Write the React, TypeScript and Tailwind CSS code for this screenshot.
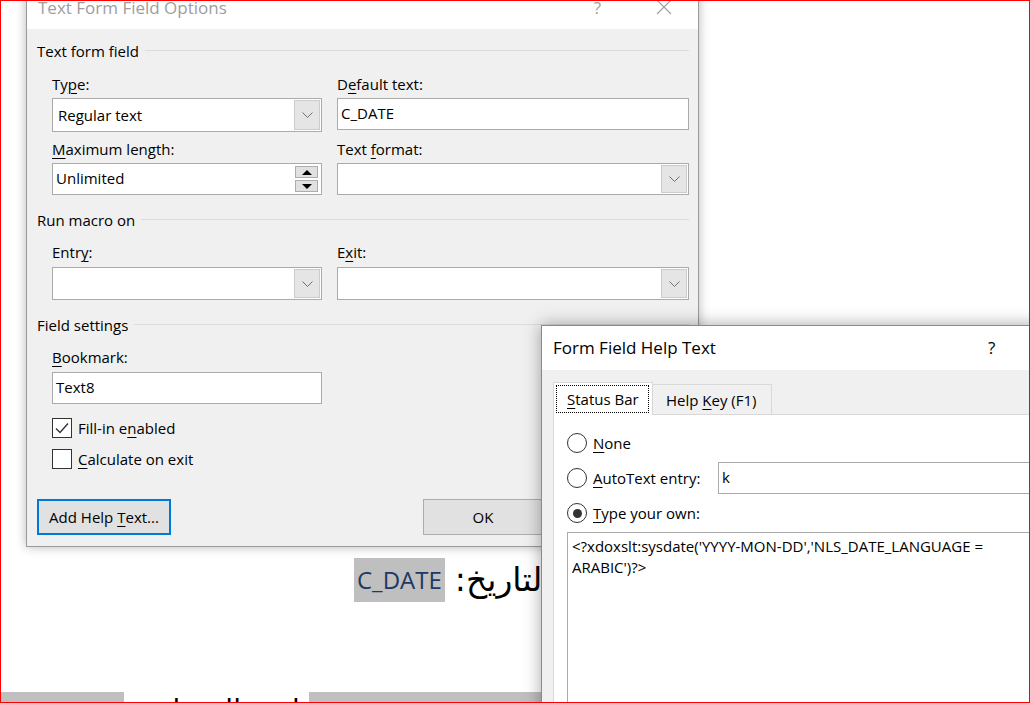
import React from 'react';

const ui = "font-['Open_Sans',sans-serif]";

function U({ children }: { children: React.ReactNode }) {
  return <span className="underline decoration-1 underline-offset-[3px]">{children}</span>;
}

function Chevron() {
  return (
    <svg width="11" height="6" viewBox="0 0 11 6" aria-hidden="true">
      <path d="M0.5 0.5L5.5 5.5L10.5 0.5" fill="none" stroke="#707070" strokeWidth="1" />
    </svg>
  );
}

function Combo({ value, className = '' }: { value?: string; className?: string }) {
  return (
    <div className={`flex border border-[#ababab] bg-white p-px ${className}`}>
      <div className="flex flex-1 items-center pl-[4px]">{value}</div>
      <div className="flex w-[26px] items-center justify-center border border-[#cccccc] bg-[#e5e5e5]">
        <Chevron />
      </div>
    </div>
  );
}

function TextBox({ value, className = '' }: { value?: string; className?: string }) {
  return (
    <div className={`flex items-center border border-[#ababab] bg-white pb-[2px] pl-[3px] ${className}`}>{value}</div>
  );
}

function Spinner() {
  return (
    <div className="flex h-[32px] border border-[#ababab] bg-white p-px">
      <div className="flex flex-1 items-center pb-[2px] pl-[2px]">Unlimited</div>
      <div className="flex w-[25px] flex-col gap-[2px] py-px pr-[2px]">
        <div className="flex flex-1 items-center justify-center border border-[#adadad] bg-[#e1e1e1]">
          <svg width="10" height="5" viewBox="0 0 10 5" aria-hidden="true">
            <path d="M0 5L5 0L10 5Z" fill="#000" />
          </svg>
        </div>
        <div className="flex flex-1 items-center justify-center border border-[#adadad] bg-[#e1e1e1]">
          <svg width="10" height="5" viewBox="0 0 10 5" aria-hidden="true">
            <path d="M0 0L5 5L10 0Z" fill="#000" />
          </svg>
        </div>
      </div>
    </div>
  );
}

function Group({ title }: { title: string }) {
  return (
    <div className="flex h-[20px] items-center leading-[20px]">
      <span>{title}</span>
      <div className="ml-[6px] mt-[-2px] h-px flex-1 bg-[#dcdcdc]" />
    </div>
  );
}

function Label({ children }: { children: React.ReactNode }) {
  return <div className="h-[20px] leading-[20px]">{children}</div>;
}

function Check({ checked, children }: { checked?: boolean; children: React.ReactNode }) {
  return (
    <div className="flex h-[20px] items-center">
      <div className="flex h-[20px] w-[20px] items-center justify-center border border-[#333333] bg-white">
        {checked && (
          <svg width="14" height="12" viewBox="0 0 14 12" aria-hidden="true">
            <path d="M1 6.5L5 10.5L13 1.5" fill="none" stroke="#333333" strokeWidth="1.4" />
          </svg>
        )}
      </div>
      <span className="ml-[6px] leading-[20px]">{children}</span>
    </div>
  );
}

function Radio({ on }: { on?: boolean }) {
  return (
    <div className="flex h-[20px] w-[20px] shrink-0 items-center justify-center rounded-full border border-[#333333] bg-white">
      {on && <div className="h-[9px] w-[9px] rounded-full bg-[#333333]" />}
    </div>
  );
}

function CloseX({ color }: { color: string }) {
  return (
    <svg width="16" height="16" viewBox="0 0 16 16" aria-hidden="true">
      <path d="M1 1L15 15M15 1L1 15" stroke={color} strokeWidth="1.1" />
    </svg>
  );
}

function FieldOptions() {
  return (
    <div
      className={`absolute left-[26px] top-[-16px] w-[673px] border border-[#9a9a9a] bg-[#f0f0f0] text-[15px] text-black shadow-[0_0_10px_rgba(0,0,0,0.28)] ${ui}`}
    >
      <div className="flex h-[44px] items-center bg-white pl-[11px] pt-[2px] text-[17px] text-[#9d9d9d]">
        <span>Text Form Field Options</span>
        <span className="ml-[367px]">?</span>
        <span className="ml-[55px] mt-[-2px]">
          <CloseX color="#9d9d9d" />
        </span>
      </div>

      <div className="pl-[10px] pr-[9px] pt-[12px] pb-[11px]">
        <Group title="Text form field" />
        <div className="mt-[13px] grid grid-cols-[270px_352px] gap-x-[15px] pl-[15px]">
          <div>
            <Label>
              Ty<U>p</U>e:
            </Label>
            <Combo value="Regular text" className="mt-[4px] h-[34px]" />
          </div>
          <div>
            <Label>
              D<U>e</U>fault text:
            </Label>
            <TextBox value="C_DATE" className="mt-[4px] h-[32px]" />
          </div>
        </div>
        <div className="mt-[7px] grid grid-cols-[270px_352px] gap-x-[15px] pl-[15px]">
          <div>
            <Label>
              <U>M</U>aximum length:
            </Label>
            <div className="mt-[4px]">
              <Spinner />
            </div>
          </div>
          <div>
            <Label>
              Text <U>f</U>ormat:
            </Label>
            <Combo className="mt-[4px] h-[32px]" />
          </div>
        </div>

        <div className="mt-[15px]">
          <Group title="Run macro on" />
        </div>
        <div className="mt-[12px] grid grid-cols-[270px_352px] gap-x-[15px] pl-[15px]">
          <div>
            <Label>
              Entr<U>y</U>:
            </Label>
            <Combo className="mt-[5px] h-[33px]" />
          </div>
          <div>
            <Label>
              E<U>x</U>it:
            </Label>
            <Combo className="mt-[5px] h-[33px]" />
          </div>
        </div>

        <div className="mt-[15px]">
          <Group title="Field settings" />
        </div>
        <div className="mt-[12px] pl-[15px]">
          <Label>
            <U>B</U>ookmark:
          </Label>
          <TextBox value="Text8" className="mt-[5px] h-[32px] w-[270px]" />
          <div className="mt-[14px]">
            <Check checked>
              Fill-in e<U>n</U>abled
            </Check>
          </div>
          <div className="mt-[11px]">
            <Check>
              <U>C</U>alculate on exit
            </Check>
          </div>
        </div>

        <div className="mt-[30px] flex">
          <div className="flex h-[36px] w-[134px] items-center justify-center border-2 border-[#0078d7] bg-[#e1e1e1]">
            <span>
              Add Help <U>T</U>ext...
            </span>
          </div>
          <div className="ml-[252px] flex h-[36px] w-[120px] items-center justify-center border border-[#adadad] bg-[#e1e1e1]">
            OK
          </div>
          <div className="ml-[10px] flex h-[36px] w-[120px] items-center justify-center border border-[#adadad] bg-[#e1e1e1]">
            Cancel
          </div>
        </div>
      </div>
    </div>
  );
}

function HelpText() {
  return (
    <div
      className={`absolute left-[541px] top-[325px] h-[420px] w-[560px] border border-[#8a8a8a] bg-[#f0f0f0] text-[15px] text-black shadow-[0_0_16px_rgba(0,0,0,0.35)] ${ui}`}
    >
      <div className="flex h-[44px] items-center bg-white pl-[11px] text-[17px]">
        <span>Form Field Help Text</span>
        <span className="ml-[272px]">?</span>
        <span className="ml-[55px]">
          <CloseX color="#000000" />
        </span>
      </div>

      <div className="pl-[11px] pt-[12px]">
        <div className="flex items-end">
          <div className="relative z-10 mb-[-1px] h-[33px] w-[100px] border border-b-0 border-[#d9d9d9] bg-white p-[2px] pr-[3px]">
            <div className="flex h-full items-center border border-dotted border-black pl-[10px] leading-[20px]">
              <span>
                <U>S</U>tatus Bar
              </span>
            </div>
          </div>
          <div className="flex h-[30px] w-[119px] items-center border border-b-0 border-l-0 border-[#d9d9d9] bg-[#f0f0f0] pl-[13px] leading-[20px]">
            <span>
              Help <U>K</U>ey (F1)
            </span>
          </div>
        </div>

        <div className="h-[320px] border border-[#d9d9d9] bg-white pl-[13px] pt-[18px]">
          <div className="flex h-[20px] items-center">
            <Radio />
            <span className="ml-[6px]">
              <U>N</U>one
            </span>
          </div>
          <div className="mt-[9px] flex h-[32px] items-center">
            <Radio />
            <span className="ml-[6px] w-[125px]">
              <U>A</U>utoText entry:
            </span>
            <TextBox value="k" className="h-[32px] flex-1" />
          </div>
          <div className="mt-[9px] flex h-[20px] items-center">
            <Radio on />
            <span className="ml-[6px]">
              <U>T</U>ype your own:
            </span>
          </div>
          <div className="mt-[9px] h-[200px] border border-[#ababab] bg-white pl-[4px] pt-[3px] leading-[20.5px]">
            <div className="whitespace-nowrap">&lt;?xdoxslt:sysdate('YYYY-MON-DD','NLS_DATE_LANGUAGE =</div>
            <div className="whitespace-nowrap">ARABIC')?&gt;</div>
          </div>
        </div>
      </div>
    </div>
  );
}

export default function App() {
  return (
    <div className="relative h-[703px] w-[1030px] overflow-hidden bg-white">
      {/* document behind the dialogs */}
      <div className="pt-[558px]">
        <div className="flex items-start pl-[354px]">
          <span className={`bg-[#bfbfbf] px-[3px] text-[24px] leading-[44px] text-[#203864] ${ui}`}>C_DATE</span>
          <span
            dir="rtl"
            className="ml-[10px] whitespace-nowrap font-['DejaVu_Sans',sans-serif] text-[33px] leading-[44px] text-black"
          >
            التاريخ:
          </span>
        </div>
        <div className="mt-[90px] flex items-start">
          <div className="h-[44px] w-[124px] bg-[#bfbfbf]" />
          <div
            dir="rtl"
            className="w-[185px] pt-[1px] text-center font-['DejaVu_Sans',sans-serif] text-[28px] leading-[34px] text-black"
          >
            اسم الموظف:
          </div>
          <div className="h-[44px] w-[240px] bg-[#bfbfbf]" />
        </div>
      </div>

      <FieldOptions />
      <HelpText />

      <div className="pointer-events-none absolute inset-0 z-50 border border-[#ff0000]" />
    </div>
  );
}
